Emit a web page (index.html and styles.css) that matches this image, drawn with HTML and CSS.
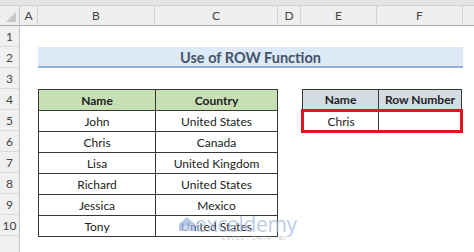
FILE: index.html
```html
<!DOCTYPE html>
<html lang="en">
<head>
    <meta charset="UTF-8">
    <title>Use of ROW Function</title>
    <link rel="stylesheet" href="styles.css">
</head>
<body>
    <div class="sheet">
        <div class="formula-edge"></div>

        <div class="corner"><span class="corner-mark"></span></div>
        <div class="col-head">A</div>
        <div class="col-head">B</div>
        <div class="col-head">C</div>
        <div class="col-head">D</div>
        <div class="col-head">E</div>
        <div class="col-head">F</div>
        <div class="col-head col-g"></div>

        <div class="row-head r1">1</div>
        <div class="row-head r2">2</div>
        <div class="row-head r3">3</div>
        <div class="row-head r4">4</div>
        <div class="row-head r5">5</div>
        <div class="row-head r6">6</div>
        <div class="row-head r7">7</div>
        <div class="row-head r8">8</div>
        <div class="row-head r9">9</div>
        <div class="row-head r10">10</div>
        <div class="row-head r11"></div>

        <div class="title">Use of ROW Function</div>

        <div class="data-area">
            <table class="data">
                <colgroup><col class="w-name"><col></colgroup>
                <tr><th>Name</th><th>Country</th></tr>
                <tr><td>John</td><td>United States</td></tr>
                <tr><td>Chris</td><td>Canada</td></tr>
                <tr><td>Lisa</td><td>United Kingdom</td></tr>
                <tr><td>Richard</td><td>United States</td></tr>
                <tr><td>Jessica</td><td>Mexico</td></tr>
                <tr><td>Tony</td><td>United States</td></tr>
            </table>
        </div>

        <div class="lookup-area">
            <table class="lookup">
                <colgroup><col class="w-lname"><col></colgroup>
                <tr><th>Name</th><th>Row Number</th></tr>
                <tr class="picked"><td>Chris</td><td></td></tr>
            </table>
        </div>

        <!-- site watermark -->
        <div class="mark">
            <svg class="mark-icon" width="18" height="16" viewBox="0 0 18 16">
                <path d="M1 8 L9 1 L17 8 L17 15 L1 15 Z" fill="#9fb6e0"/>
                <path d="M5 15 L5 10 L13 10 L13 15" fill="#c7d5ef"/>
            </svg>
            <span class="mark-name">exceldemy</span>
            <span class="mark-tag">EXCEL · DATA · BI</span>
        </div>
    </div>
</body>
</html>
```

FILE: styles.css
```css
* {
    box-sizing: border-box;
}

body {
    margin: 0;
    background: #fff;
    font-family: Lato, "Open Sans", sans-serif;
    color: #222;
    overflow: hidden;
}

.sheet {
    position: relative;
    display: grid;
    grid-template-columns: 20px 18px 117px 123px 23px 76px 86px 1fr;
    grid-template-rows: 6px 20px repeat(11, 21px);
    width: 474px;
    height: 252px;
    overflow: hidden;
}

.formula-edge {
    grid-column: 1 / -1;
    background: #e4e4e4;
    border-bottom: 1px solid #d2d2d2;
}

/* column letters */
.corner,
.col-head {
    grid-row: 2;
    background: #efefef;
    border-bottom: 1px solid #ababab;
    border-right: 1px solid #d4d4d4;
    font-size: 12px;
    color: #444;
    display: flex;
    align-items: center;
    justify-content: center;
}

.corner {
    grid-column: 1;
    position: relative;
    border-right-color: #c4c4c4;
}

.corner-mark {
    position: absolute;
    right: 3px;
    bottom: 3px;
    width: 0;
    height: 0;
    border-left: 10px solid transparent;
    border-bottom: 10px solid #c6c6c6;
}

.col-g {
    border-right: none;
}

/* row numbers */
.row-head {
    grid-column: 1;
    background: #f0f0f0;
    border-right: 1px solid #c4c4c4;
    border-bottom: 1px solid #dadada;
    font-size: 12px;
    color: #444;
    display: flex;
    align-items: center;
    justify-content: center;
}

.r1 { grid-row: 3; }
.r2 { grid-row: 4; }
.r3 { grid-row: 5; }
.r4 { grid-row: 6; }
.r5 { grid-row: 7; }
.r6 { grid-row: 8; }
.r7 { grid-row: 9; }
.r8 { grid-row: 10; }
.r9 { grid-row: 11; }
.r10 { grid-row: 12; }
.r11 { grid-row: 13; border-bottom: none; }

.title {
    grid-column: 3 / 8;
    grid-row: 4;
    background: #dde9f6;
    border-bottom: 2px solid #93b1dc;
    color: #44546a;
    font-weight: bold;
    font-size: 14.5px;
    display: flex;
    align-items: center;
    justify-content: center;
    padding-top: 1px;
}

.data-area {
    grid-column: 3 / 5;
    grid-row: 6 / 13;
}

.lookup-area {
    grid-column: 6 / 8;
    grid-row: 6 / 8;
}

table {
    width: 100%;
    height: 100%;
    border-collapse: collapse;
    table-layout: fixed;
    font-size: 12px;
}

th,
td {
    border: 1px solid #383838;
    text-align: center;
    padding: 0;
    height: 21px;
    color: #222;
}

th {
    font-weight: bold;
}

.w-name {
    width: 117px;
}

.w-lname {
    width: 76px;
}

.data th {
    background: #c6e0b4;
}

.lookup th {
    background: #d6dce4;
}

.lookup .picked td {
    border-top: 3px solid #e11420;
    border-bottom: 3px solid #e11420;
}

.lookup .picked td:first-child {
    border-left: 3px solid #e11420;
}

.lookup .picked td:last-child {
    border-right: 3px solid #e11420;
}

/* watermark over the bottom rows */
.mark {
    position: absolute;
    left: 178px;
    top: 210px;
    opacity: 0.75;
    pointer-events: none;
}

.mark-icon {
    position: absolute;
    left: 0;
    top: 6px;
}

.mark-name {
    position: absolute;
    left: 17px;
    top: 0;
    font-family: "Open Sans", sans-serif;
    font-size: 21px;
    color: #a9bde3;
    letter-spacing: -0.3px;
}

.mark-tag {
    position: absolute;
    left: 44px;
    top: 24px;
    white-space: nowrap;
    font-size: 6px;
    letter-spacing: 1px;
    color: #b5b5b5;
}
```
